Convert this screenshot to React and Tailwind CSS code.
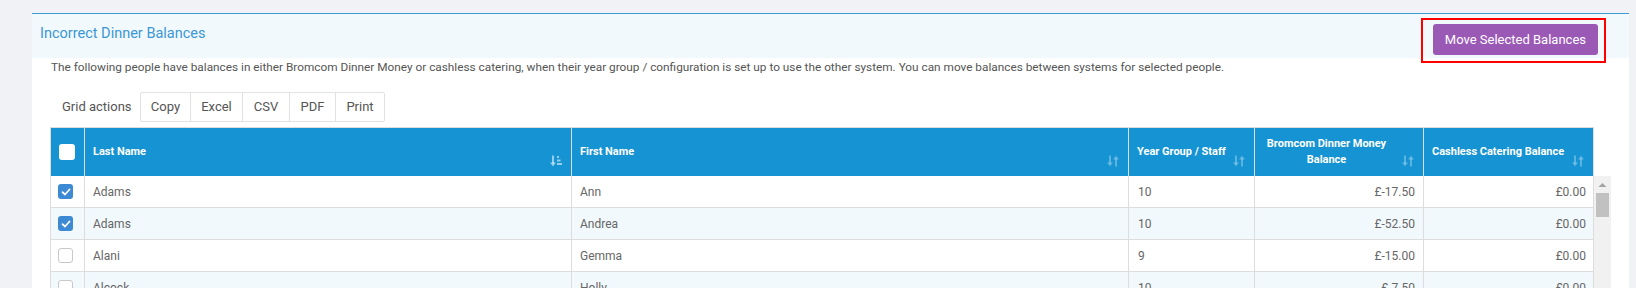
import React from "react";

const rows = [
  { checked: true, last: "Adams", first: "Ann", year: "10", bromcom: "£-17.50", cashless: "£0.00" },
  { checked: true, last: "Adams", first: "Andrea", year: "10", bromcom: "£-52.50", cashless: "£0.00" },
  { checked: false, last: "Alani", first: "Gemma", year: "9", bromcom: "£-15.00", cashless: "£0.00" },
  { checked: false, last: "Alcock", first: "Holly", year: "10", bromcom: "£-7.50", cashless: "£0.00" },
  { checked: false, last: "Allen", first: "Jack", year: "8", bromcom: "£-2.20", cashless: "£0.00" },
];

const cols = "grid grid-cols-[34px_487px_557px_126px_169px_170px]";

function SortIcon({ active }) {
  if (active) {
    return (
      <svg width="12" height="12" viewBox="0 0 12 12" className="shrink-0">
        <g fill="rgba(255,255,255,0.55)">
          <rect x="2" y="0.5" width="2" height="8" />
          <path d="M0 7.5 L6 7.5 L3 11.5 Z" />
          <rect x="7" y="1" width="2" height="2" />
          <rect x="7" y="4.5" width="3.5" height="2" />
          <rect x="7" y="8" width="5" height="2" />
        </g>
      </svg>
    );
  }
  return (
    <svg width="12" height="12" viewBox="0 0 12 12" className="shrink-0">
      <g fill="rgba(255,255,255,0.3)">
        <rect x="2" y="0.5" width="2" height="8" />
        <path d="M0 7.5 L6 7.5 L3 11.5 Z" />
        <rect x="8" y="3.5" width="2" height="8" />
        <path d="M6 4.5 L12 4.5 L9 0.5 Z" />
      </g>
    </svg>
  );
}

function Checkbox({ checked, header }) {
  if (header) return <div className="h-4 w-4 rounded-[3px] bg-white" />;
  if (checked) {
    return (
      <div className="flex h-[15px] w-[15px] items-center justify-center rounded-[3px] bg-[#3d8ad4]">
        <svg width="10" height="10" viewBox="0 0 10 10">
          <path d="M1.5 5.2 L4 7.5 L8.5 2.5" fill="none" stroke="#fff" strokeWidth="1.8" strokeLinecap="round" strokeLinejoin="round" />
        </svg>
      </div>
    );
  }
  return <div className="h-[15px] w-[15px] rounded-[3px] border border-[#c8c8c8] bg-white" />;
}

function HeadCell({ children, center, active, last }) {
  return (
    <div className={"flex h-[48px] justify-between pl-2 pr-[9px] " + (last ? "" : "border-r border-[#ddd]")}>
      <div className={"self-center text-[11px] font-bold leading-[16px] text-white " + (center ? "flex-1 text-center pr-3" : "")}>
        {children}
      </div>
      <div className="mb-[9px] self-end">
        <SortIcon active={active} />
      </div>
    </div>
  );
}

export default function App() {
  return (
    <div className="h-[288px] overflow-hidden bg-[#f1f2f6] pt-[13px] font-['Roboto',sans-serif]">
      <div className="ml-[32px] w-[1597px] border-t border-[#3c9bd6] bg-white">
        <div className="flex h-[44px] items-start justify-between bg-[#f2f9fd] pl-2 pr-[31px]">
          <div className="pt-[11px] text-[14.5px] leading-[18px] text-[#3a97d6]">Incorrect Dinner Balances</div>
          <div className="relative mt-[10px]">
            <div className="pointer-events-none absolute -left-[12px] -right-[8px] -top-[6px] -bottom-[8px] border-2 border-[#f00]" />
            <button className="h-[31px] rounded-[3px] bg-[#9b59b6] px-3 text-[13px] text-white">Move Selected Balances</button>
          </div>
        </div>

        <div className="pt-px pl-[19px] text-[11.8px] leading-[17px] text-[#555]">
          The following people have balances in either Bromcom Dinner Money or cashless catering, when their year group / configuration is set up to use the other system. You can move balances between systems for selected people.
        </div>

        <div className="mt-[16px] flex items-center pl-[30px]">
          <div className="w-[78px] text-[13px] text-[#555]">Grid actions</div>
          <div className="flex h-[30px] rounded-[2px] border border-[#e2e2e2] text-[13px] text-[#555]">
            <div className="flex w-[50px] items-center justify-center border-r border-[#e2e2e2]">Copy</div>
            <div className="flex w-[52px] items-center justify-center border-r border-[#e2e2e2]">Excel</div>
            <div className="flex w-[47px] items-center justify-center border-r border-[#e2e2e2]">CSV</div>
            <div className="flex w-[46px] items-center justify-center border-r border-[#e2e2e2]">PDF</div>
            <div className="flex w-[48px] items-center justify-center">Print</div>
          </div>
        </div>

        <div className="mt-[5px] pl-[18px]">
          <div className={cols + " w-[1544px] border-l border-t border-[#ddd] bg-[#1593d3]"}>
            <div className="flex h-[48px] items-center justify-center border-r border-[#ddd] pr-px">
              <Checkbox header />
            </div>
            <HeadCell active>Last Name</HeadCell>
            <HeadCell>First Name</HeadCell>
            <HeadCell>Year Group / Staff</HeadCell>
            <HeadCell center>Bromcom Dinner Money<br />Balance</HeadCell>
            <HeadCell>Cashless Catering Balance</HeadCell>
          </div>

          <div className="flex">
            <div className="w-[1544px] border-l border-[#ddd]">
              {rows.map((r, i) => (
                <div key={i} className={cols + " h-[32px] border-b border-[#ddd] text-[12px] text-[#666] " + (i % 2 ? "bg-[#f2f9fd]" : "bg-white")}>
                  <div className="flex items-center pl-[7px] border-r border-[#ddd]">
                    <Checkbox checked={r.checked} />
                  </div>
                  <div className="flex items-center border-r border-[#ddd] pl-2">{r.last}</div>
                  <div className="flex items-center border-r border-[#ddd] pl-2">{r.first}</div>
                  <div className="flex items-center border-r border-[#ddd] pl-[9px]">{r.year}</div>
                  <div className="flex items-center justify-end border-r border-[#ddd] pr-2">{r.bromcom}</div>
                  <div className="flex items-center justify-end border-r border-[#ddd] pr-[7px]">{r.cashless}</div>
                </div>
              ))}
            </div>
            <div className="flex h-[160px] w-[17px] flex-col items-center bg-[#f1f1f1]">
              <svg width="9" height="6" viewBox="0 0 9 6" className="mt-[6px]">
                <path d="M0.5 5 L4.5 1 L8.5 5 Z" fill="#a3a3a3" />
              </svg>
              <div className="mt-[5px] h-[24px] w-[13px] bg-[#c1c1c1]" />
            </div>
          </div>
        </div>
      </div>
    </div>
  );
}
